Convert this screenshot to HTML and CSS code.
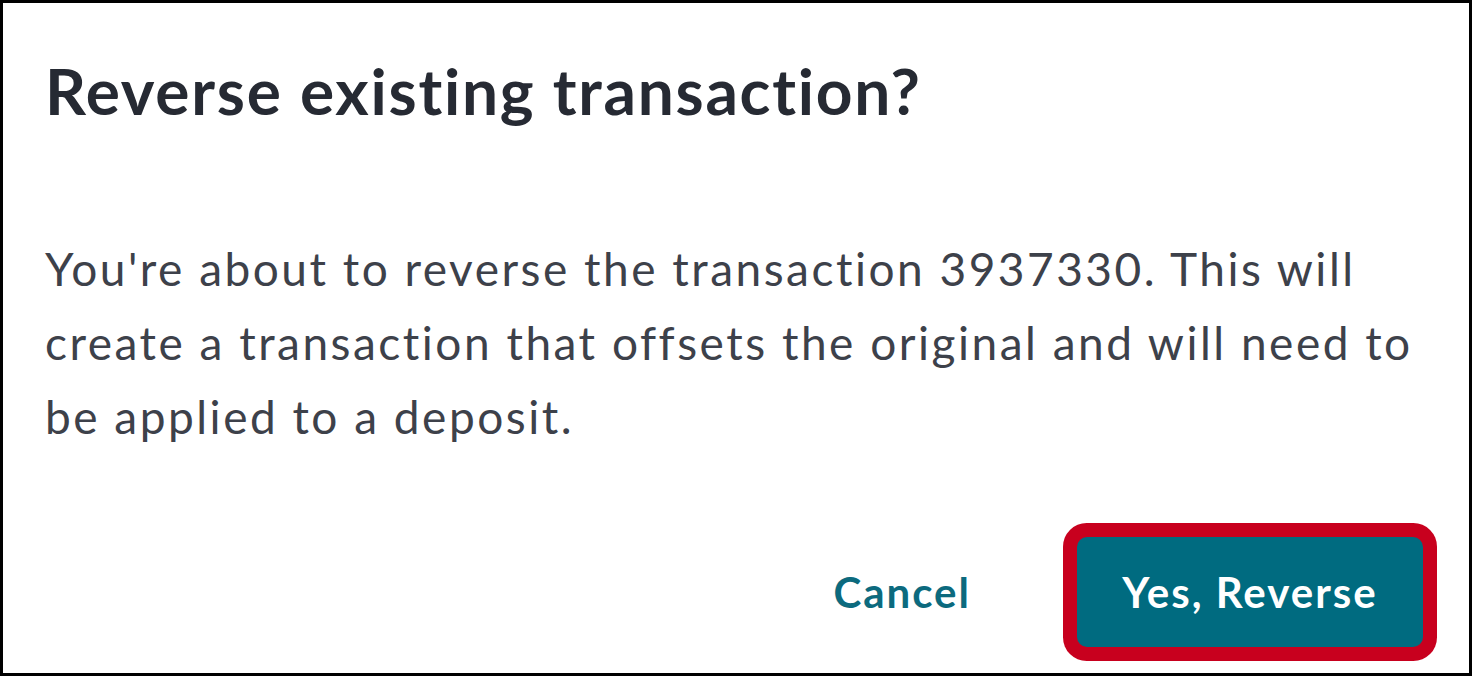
FILE: index.html
```html
<!DOCTYPE html>
<html>
<head>
<meta charset="utf-8">
<link rel="stylesheet" href="styles.css">
</head>
<body>
<div class="dialog">
  <h1 class="title">Reverse existing transaction?</h1>
  <p class="message">You're about to reverse the transaction 3937330. This will create a transaction that offsets the original and will need to be applied to a deposit.</p>
  <div class="actions">
    <button class="btn btn-link">Cancel</button>
    <button class="btn btn-primary">Yes, Reverse</button>
  </div>
</div>
</body>
</html>
```

FILE: styles.css
```css
html, body {
  margin: 0;
  padding: 0;
  background: #ffffff;
}
.dialog {
  box-sizing: border-box;
  width: 1472px;
  height: 676px;
  border: 3px solid #000000;
  background: #ffffff;
  padding: 0 20px 0 42px;
  display: flex;
  flex-direction: column;
}
.title {
  margin: 50px 0 0 0;
  font-family: Lato, "Liberation Sans", sans-serif;
  font-weight: 700;
  font-size: 64px;
  line-height: 76px;
  letter-spacing: 1.75px;
  color: #262a33;
}
.message {
  margin: 103px 0 0 0;
  font-family: Lato, "Liberation Sans", sans-serif;
  font-weight: 400;
  font-size: 46px;
  line-height: 74px;
  letter-spacing: 2.5px;
  color: #3d414a;
}
.actions {
  margin-top: auto;
  margin-bottom: 26px;
  padding-right: 26px;
  display: flex;
  justify-content: flex-end;
  align-items: center;
  gap: 106px;
}
.btn {
  font-family: Lato, "Liberation Sans", sans-serif;
  font-weight: 700;
  font-size: 42px;
  letter-spacing: 2px;
  border: none;
  cursor: pointer;
}
.btn-link {
  background: transparent;
  color: #0c6a7e;
  padding: 0;
}
.btn-primary {
  background: #006b80;
  color: #ffffff;
  width: 346px;
  height: 110px;
  border-radius: 10px;
  box-shadow: 0 0 0 14px #c8001e;
}
```
